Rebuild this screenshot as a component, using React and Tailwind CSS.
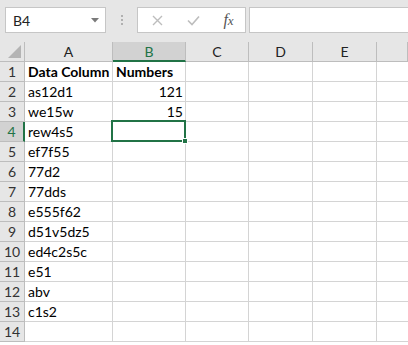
import React from 'react';

const cols = ['A', 'B', 'C', 'D', 'E', 'F'];
const data = [
  ['Data Column', 'Numbers'],
  ['as12d1', '121'],
  ['we15w', '15'],
  ['rew4s5', ''],
  ['ef7f55', ''],
  ['77d2', ''],
  ['77dds', ''],
  ['e555f62', ''],
  ['d51v5dz5', ''],
  ['ed4c2s5c', ''],
  ['e51', ''],
  ['abv', ''],
  ['c1s2', ''],
  ['', ''],
];

const font = { fontFamily: 'Lato, "Liberation Sans", sans-serif' };

const App = () => {
  return (
    <div className="w-[408px] h-[345px] overflow-hidden bg-white text-black" style={font}>
      {/* formula bar */}
      <div className="h-[42px] bg-[#e6e6e6] flex items-start pt-[7px] pl-[5px] gap-0">
        <div className="w-[101px] h-[26px] bg-white border border-[#c6c6c6] flex items-center justify-between pl-[7px] pr-[6px]">
          <span className="text-[14px] text-[#222]">B4</span>
          <svg width="8" height="5" viewBox="0 0 8 5"><path d="M0 0h8L4 4.5z" fill="#7a7a7a" /></svg>
        </div>
        <div className="w-[31px] h-[26px] flex flex-col items-center justify-center gap-[2px]">
          <span className="w-[2px] h-[2px] bg-[#b0b0b0]" />
          <span className="w-[2px] h-[2px] bg-[#b0b0b0]" />
          <span className="w-[2px] h-[2px] bg-[#b0b0b0]" />
        </div>
        <div className="w-[109px] h-[26px] bg-white border border-[#c6c6c6] flex items-center">
          <div className="w-[37px] flex justify-center pl-[2px]">
            <svg width="11" height="11" viewBox="0 0 11 11"><path d="M1 1l9 9M10 1l-9 9" stroke="#bdbdbd" strokeWidth="1.4" /></svg>
          </div>
          <div className="w-[37px] flex justify-center">
            <svg width="13" height="11" viewBox="0 0 13 11"><path d="M1 5.5l4 4L12 1.5" stroke="#bdbdbd" strokeWidth="1.6" fill="none" /></svg>
          </div>
          <div className="w-[33px] flex justify-center">
            <span className="italic text-[16px] text-[#555]" style={{ fontFamily: '"Liberation Serif", serif' }}>f<span className="text-[13px]">x</span></span>
          </div>
        </div>
        <div className="ml-[3px] flex-1 h-[26px] bg-white border border-[#c6c6c6] border-r-0" />
      </div>

      {/* sheet */}
      <div className="grid grid-cols-[25px_88px_73px_63px_64px_64px_1fr] auto-rows-[20px]">
        {/* corner */}
        <div className="bg-[#e6e6e6] border-r border-b border-[#bdbdbd] flex items-end justify-end pr-[3px] pb-[3px]">
          <svg width="13" height="13" viewBox="0 0 13 13"><path d="M13 0v13H0z" fill="#b4b4b4" /></svg>
        </div>
        {cols.map((c) => (
          <div
            key={c}
            className={
              c === 'B'
                ? 'bg-[#d2d2d2] border-r border-[#bdbdbd] border-b-2 border-b-[#217346] flex items-center justify-center text-[14px] text-[#217346]'
                : 'bg-[#e6e6e6] border-r border-b border-[#bdbdbd] flex items-center justify-center text-[14px] text-[#222]'
            }
          >
            {c === 'F' ? '' : c}
          </div>
        ))}
        {data.map((row, i) => {
          const n = i + 1;
          const sel = n === 4;
          return (
            <React.Fragment key={n}>
              <div
                className={
                  sel
                    ? 'bg-[#d2d2d2] border-r-2 border-r-[#217346] border-b border-[#bdbdbd] flex items-center justify-center text-[14px] text-[#217346]'
                    : 'bg-[#e6e6e6] border-r border-b border-[#bdbdbd] flex items-center justify-center text-[14px] text-[#333]'
                }
              >
                {n}
              </div>
              <div className={`border-r border-b border-[#d4d4d4] pl-[3px] text-[14px] leading-[20px] whitespace-nowrap overflow-hidden ${n === 1 ? 'font-bold' : ''}`}>
                {row[0]}
              </div>
              <div
                className={`relative border-r border-b border-[#d4d4d4] text-[14px] leading-[20px] whitespace-nowrap ${
                  n === 1 ? 'font-bold pl-[3px]' : 'text-right pr-[2px]'
                }`}
              >
                {row[1]}
                {sel && (
                  <div className="absolute z-10 -left-[2px] -top-[2px] w-[75px] h-[22px] border-2 border-[#217346]">
                    <div className="absolute -right-[4px] -bottom-[4px] w-[6px] h-[6px] bg-[#217346] border border-white" />
                  </div>
                )}
              </div>
              <div className="border-r border-b border-[#d4d4d4]" />
              <div className="border-r border-b border-[#d4d4d4]" />
              <div className="border-r border-b border-[#d4d4d4]" />
              <div className="border-b border-[#d4d4d4]" />
            </React.Fragment>
          );
        })}
      </div>
    </div>
  );
};

export default App;
